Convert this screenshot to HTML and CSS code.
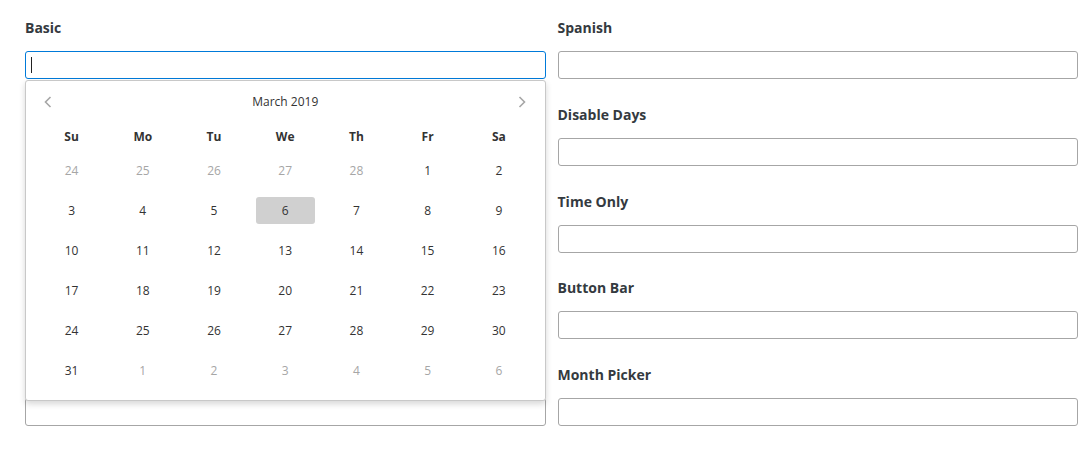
FILE: index.html
```html
<!DOCTYPE html>
<html lang="en">

<head>
  <meta charset="UTF-8">
  <meta name="viewport" content="width=device-width, initial-scale=1.0">
  <title>Calendar</title>
  <link rel="stylesheet" href="styles.css">
</head>

<body>
  <div class="page">
    <div class="column">
      <div class="field field-basic">
        <label for="basic">Basic</label>
        <div class="input-wrap">
          <input type="text" id="basic" class="focused">
          <span class="caret"></span>
        </div>

        <div class="datepicker">
          <div class="dp-header">
            <button type="button" class="dp-nav" aria-label="Previous month">
              <svg width="8" height="12" viewBox="0 0 8 12"><path d="M6.5 1 L1.5 6 L6.5 11" fill="none" stroke="currentColor" stroke-width="1.6"/></svg>
            </button>
            <span class="dp-title">March 2019</span>
            <button type="button" class="dp-nav" aria-label="Next month">
              <svg width="8" height="12" viewBox="0 0 8 12"><path d="M1.5 1 L6.5 6 L1.5 11" fill="none" stroke="currentColor" stroke-width="1.6"/></svg>
            </button>
          </div>
          <table class="dp-table">
            <thead>
              <tr><th>Su</th><th>Mo</th><th>Tu</th><th>We</th><th>Th</th><th>Fr</th><th>Sa</th></tr>
            </thead>
            <tbody id="days"></tbody>
          </table>
        </div>
      </div>
      <div class="field">
        <label for="minmax">Min / Max</label>
        <input type="text" id="minmax">
      </div>
      <div class="field">
        <label for="multiple">Multiple</label>
        <input type="text" id="multiple">
      </div>
      <div class="field">
        <label for="range">Range</label>
        <input type="text" id="range">
      </div>
      <div class="field">
        <label for="format">Date Format</label>
        <input type="text" id="format">
      </div>
    </div>

    <div class="column">
      <div class="field">
        <label for="spanish">Spanish</label>
        <input type="text" id="spanish">
      </div>
      <div class="field">
        <label for="disabled">Disable Days</label>
        <input type="text" id="disabled">
      </div>
      <div class="field">
        <label for="time">Time Only</label>
        <input type="text" id="time">
      </div>
      <div class="field">
        <label for="buttonbar">Button Bar</label>
        <input type="text" id="buttonbar">
      </div>
      <div class="field">
        <label for="month">Month Picker</label>
        <input type="text" id="month">
      </div>
    </div>
  </div>

  <script>
    const tbody = document.getElementById("days");
    // March 2019 starts on a Friday, 6 weeks shown
    let day = 24;
    let month = -1;
    for (let week = 0; week < 6; week++) {
      const row = document.createElement("tr");
      for (let i = 0; i < 7; i++) {
        const cell = document.createElement("td");
        const span = document.createElement("span");
        span.textContent = day;
        if (month !== 0) cell.classList.add("other-month");
        if (month === 0 && day === 6) span.classList.add("today");
        cell.appendChild(span);
        row.appendChild(cell);

        day++;
        if (month === -1 && day > 28) { day = 1; month = 0; }
        else if (month === 0 && day > 31) { day = 1; month = 1; }
      }
      tbody.appendChild(row);
    }
  </script>
</body>

</html>
```

FILE: styles.css
```css
body {
  margin: 0;
  background-color: #fff;
  font-family: "Open Sans", "Liberation Sans", Arial, sans-serif;
  color: #333;
}

.page {
  display: grid;
  grid-template-columns: 1fr 1fr;
  column-gap: 12px;
  padding: 17px 5px 0 25px;
}

.field {
  margin-bottom: 24.75px;
}

.field-basic {
  position: relative;
}

.field label {
  display: block;
  font-size: 14px;
  font-weight: 700;
  line-height: 21px;
  color: #343a40;
  margin-bottom: 13px;
}

.field input {
  display: block;
  width: 100%;
  height: 28px;
  box-sizing: border-box;
  margin: 0;
  padding: 4px 6px;
  border: 1px solid #a6a6a6;
  border-radius: 3px;
  font-family: inherit;
  font-size: 14px;
  outline: none;
}

.field input.focused {
  border-color: #007ad9;
}

.input-wrap {
  position: relative;
}

.caret {
  position: absolute;
  left: 6px;
  top: 6px;
  width: 1px;
  height: 16px;
  background-color: #222;
}

.datepicker {
  position: absolute;
  z-index: 10;
  top: 63px;
  left: 0;
  right: 0;
  box-sizing: border-box;
  padding: 11px 10px 10px;
  background-color: #fff;
  border: 1px solid #c8c8c8;
  border-radius: 3px;
  box-shadow: 0 3px 6px rgba(0, 0, 0, 0.16);
  font-size: 12px;
}

.dp-header {
  display: flex;
  align-items: center;
  justify-content: space-between;
  height: 20px;
}

.dp-nav {
  width: 24px;
  height: 20px;
  padding: 0;
  border: none;
  background: none;
  color: #a6a6a6;
  display: flex;
  align-items: center;
  justify-content: center;
  cursor: pointer;
}

.dp-title {
  line-height: 20px;
  color: #333;
}

.dp-table {
  width: 100%;
  margin-top: 10px;
  border-collapse: collapse;
  table-layout: fixed;
}

.dp-table th {
  height: 28px;
  padding: 0;
  font-weight: 700;
  text-align: center;
  color: #333;
}

.dp-table td {
  height: 40px;
  padding: 0;
  text-align: center;
  vertical-align: middle;
  color: #333;
}

.dp-table td span {
  display: block;
  height: 27px;
  line-height: 27px;
  margin: 0 6px;
  border-radius: 3px;
}

.dp-table td.other-month {
  color: #a6a6a6;
}

.dp-table td span.today {
  background-color: #d0d0d0;
}
```
